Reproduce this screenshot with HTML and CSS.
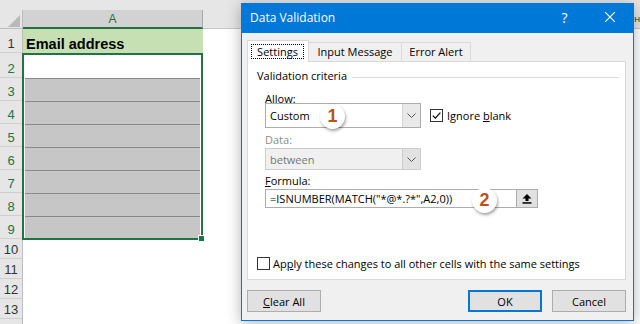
FILE: index.html
```html
<!DOCTYPE html>
<html>
<head>
<meta charset="utf-8">
<link rel="stylesheet" href="styles.css">
</head>
<body>
<div class="topstrip"></div>
<div class="sheet">
  <div class="rowheads">
    <div class="corner"><span class="tri"></span></div>
    <div class="rh h24">1</div>
    <div class="rh h25 sel">2</div>
    <div class="rh h23 sel">3</div>
    <div class="rh h23 sel">4</div>
    <div class="rh h23 sel">5</div>
    <div class="rh h23 sel">6</div>
    <div class="rh h23 sel">7</div>
    <div class="rh h23 sel">8</div>
    <div class="rh h23 sel">9</div>
    <div class="rh h20">10</div>
    <div class="rh h20">11</div>
    <div class="rh h20">12</div>
    <div class="rh h20">13</div>
    <div class="rh h20"></div>
  </div>
  <div class="colA">
    <div class="colhead">A</div>
    <div class="cell title-cell">Email address</div>
    <div class="selection">
      <div class="cell active"></div>
      <div class="cell gray"></div>
      <div class="cell gray"></div>
      <div class="cell gray"></div>
      <div class="cell gray"></div>
      <div class="cell gray"></div>
      <div class="cell gray"></div>
      <div class="cell gray last"></div>
      <span class="handle"></span>
    </div>
  </div>
  <div class="colrest">
    <div class="hdr-fill"><span class="hdr-letter">H</span></div>
  </div>
</div>

<div class="dialog">
  <div class="titlebar">
    <span class="title">Data Validation</span>
    <span class="tb-btn help">?</span>
    <span class="tb-btn close">
      <svg width="10" height="10" viewBox="0 0 10 10"><path d="M0 0 L10 10 M10 0 L0 10" stroke="#fff" stroke-width="1.1" fill="none"/></svg>
    </span>
  </div>
  <div class="dbody">
    <div class="tabs">
      <div class="tab active"><span class="focus">Settings</span></div>
      <div class="tab t-input">Input Message</div>
      <div class="tab t-error">Error Alert</div>
    </div>
    <div class="panel">
      <div class="group-title"><span>Validation criteria</span><span class="gline"></span></div>

      <div class="label lbl-allow"><u>A</u>llow:</div>
      <div class="allow-row">
        <div class="combo combo-allow">
          <span class="combo-text">Custom</span>
          <span class="drop">
            <svg width="9" height="5" viewBox="0 0 9 5"><path d="M0.5 0.5 L4.5 4.5 L8.5 0.5" stroke="#555" stroke-width="1" fill="none"/></svg>
          </span>
          <span class="badge b1">1</span>
        </div>
        <div class="check">
          <span class="box">
            <svg width="11" height="11" viewBox="0 0 11 11"><path d="M1.8 5.6 L4.3 8.1 L9.4 2.6" stroke="#000" stroke-width="1.2" fill="none"/></svg>
          </span>
          <span>Ignore <u>b</u>lank</span>
        </div>
      </div>

      <div class="label dis lbl-data">Data:</div>
      <div class="combo combo-dis">
        <span class="combo-text">between</span>
        <span class="drop">
          <svg width="9" height="5" viewBox="0 0 9 5"><path d="M0.5 0.5 L4.5 4.5 L8.5 0.5" stroke="#555" stroke-width="1" fill="none"/></svg>
        </span>
      </div>

      <div class="label lbl-formula"><u>F</u>ormula:</div>
      <div class="formula">
        <span class="ftext">=ISNUMBER(MATCH("*@*.?*",A2,0))</span>
        <span class="fbtn">
          <svg width="10" height="10" viewBox="0 0 10 10"><polygon points="5,0 9.5,4.5 6.5,4.5 6.5,7 3.5,7 3.5,4.5 0.5,4.5" fill="#000"/><rect x="0.5" y="8.2" width="9" height="1.5" fill="#000"/></svg>
        </span>
        <span class="badge b2">2</span>
      </div>

      <div class="check apply">
        <span class="box"></span>
        <span>Ap<u>p</u>ly these changes to all other cells with the same settings</span>
      </div>
    </div>
    <div class="buttons">
      <div class="btn"><u>C</u>lear All</div>
      <div class="btn ok">OK</div>
      <div class="btn cancel">Cancel</div>
    </div>
  </div>
</div>
</body>
</html>
```

FILE: styles.css
```css
* { box-sizing: border-box; margin: 0; padding: 0; }
html, body { width: 640px; height: 324px; overflow: hidden; }
body {
  background: #fff;
  font-family: "Liberation Sans", Arial, sans-serif;
  position: relative;
}

/* ---------- spreadsheet ---------- */
.topstrip { height: 10px; background: #e6e6e6; }
.sheet { display: flex; }
.rowheads { width: 23px; display: flex; flex-direction: column; }
.corner {
  height: 19px;
  background: #e6e6e6;
  border-right: 1px solid #bdbdbd;
  border-bottom: 1px solid #bdbdbd;
  display: flex;
  justify-content: flex-end;
  align-items: flex-end;
  padding: 0 2px 1px 0;
}
.tri {
  width: 0; height: 0;
  border-left: 12px solid transparent;
  border-bottom: 12px solid #b9b9b9;
}
.rh {
  background: #e6e6e6;
  border-right: 1px solid #bdbdbd;
  border-bottom: 1px solid #cfcfcf;
  display: flex;
  justify-content: center;
  align-items: flex-end;
  font-size: 13px;
  line-height: 13px;
  color: #333;
  padding-bottom: 2px;
}
.rh.sel { color: #217346; }
.h24 { height: 24px; }
.h25 { height: 25px; }
.h23 { height: 23px; }
.h20 { height: 20px; }

.colA { width: 180px; display: flex; flex-direction: column; }
.colhead {
  height: 19px;
  background: #d2d2d2;
  border-bottom: 2px solid #217346;
  border-right: 1px solid #ababab;
  color: #217346;
  font-size: 12px;
  display: flex;
  align-items: center;
  justify-content: center;
}
.title-cell {
  height: 24px;
  background: #c6e0b4;
  font-weight: bold;
  font-size: 14.5px;
  line-height: 15px;
  padding: 0 0 1px 3px;
  display: flex;
  align-items: flex-end;
  color: #000;
}
.selection {
  position: relative;
  margin-left: -1px;
  width: 181px;
  height: 187px;
  border: 2px solid #217346;
  padding: 0 1px;
  display: flex;
  flex-direction: column;
}
.cell.active { height: 23px; background: #fff; }
.cell.gray {
  height: 23px;
  background: #c6c6c6;
  border-top: 1px solid #8a8a8a;
}
.cell.gray.last { height: 22px; }
.handle {
  position: absolute;
  right: -4px;
  bottom: -4px;
  width: 7px;
  height: 7px;
  background: #217346;
  border: 1px solid #fff;
}
.colrest { flex: 1; }
.hdr-fill {
  height: 19px;
  background: #e6e6e6;
  border-bottom: 1px solid #c6c6c6;
  display: flex;
  justify-content: flex-end;
  align-items: center;
}
.hdr-letter { font-size: 8px; color: #222; margin-right: 0; }

/* ---------- dialog ---------- */
.dialog {
  position: absolute;
  left: 241px;
  top: 3px;
  width: 393px;
  height: 318px;
  border: 1px solid #0078d7;
  background: #f0f0f0;
  box-shadow: 0 2px 14px rgba(0, 0, 0, 0.3);
  display: flex;
  flex-direction: column;
  font-family: "Open Sans", "Noto Sans", sans-serif;
  font-size: 11px;
  color: #000;
}
.titlebar {
  height: 29px;
  background: #0078d7;
  color: #fff;
  display: flex;
  align-items: center;
}
.title { flex: 1; padding-left: 8px; font-size: 12px; padding-bottom: 3px; }
.tb-btn {
  width: 45px;
  height: 29px;
  display: flex;
  align-items: center;
  justify-content: center;
  padding-bottom: 3px;
}
.help { font-size: 14px; }
.close { width: 46px; }

.dbody {
  flex: 1;
  display: flex;
  flex-direction: column;
  padding: 7px 7px 8px 5px;
}
.tabs { height: 21px; display: flex; align-items: flex-start; }
.tab {
  height: 19px;
  margin-top: 2px;
  border: 1px solid #d9d9d9;
  border-bottom: none;
  background: #f0f0f0;
  text-align: center;
  line-height: 14px;
  padding-top: 2px;
  margin-left: -1px;
}
.tab.active {
  position: relative;
  z-index: 1;
  height: 22px;
  margin-top: 0;
  margin-left: 0;
  width: 62px;
  background: #fff;
  padding: 3px 4px 3px 3px;
  display: flex;
}
.focus {
  flex: 1;
  border: 1px dotted #000;
  line-height: 13px;
  text-align: center;
}
.t-input { width: 94px; }
.t-error { width: 70px; }

.panel {
  height: 219px;
  background: #fff;
  border: 1px solid #d9d9d9;
  display: flex;
  flex-direction: column;
  padding: 0 0 0 9px;
}
.group-title {
  margin-top: 6px;
  height: 16px;
  line-height: 16px;
  display: flex;
  align-items: center;
}
.gline {
  flex: 1;
  height: 1px;
  background: #dcdcdc;
  margin: 2px 6px 0 5px;
}
.label { margin-left: 8px; height: 12px; line-height: 12px; }
.label.dis { color: #8d8d8d; }
.lbl-allow { margin-top: 9px; margin-bottom: -2px; }
.lbl-data { margin-top: 6px; margin-bottom: 2px; }
.lbl-formula { margin-top: 5px; margin-bottom: 2px; }

.allow-row { display: flex; align-items: center; margin-left: 8px; }
.combo {
  position: relative;
  width: 156px;
  display: flex;
  align-items: stretch;
  border: 1px solid #acacac;
}
.combo-allow { height: 25px; background: #fff; }
.combo-dis { height: 22px; margin-left: 8px; background: #f0f0f0; border-color: #cccccc; color: #777; }
.combo-text { flex: 1; padding-left: 4px; display: flex; align-items: center; }
.drop {
  width: 18px;
  background: #e9e9e9;
  border-left: 1px solid #d4d4d4;
  display: flex;
  align-items: center;
  justify-content: center;
}
.combo-dis .drop { background: #e2e2e2; border-left-color: #cccccc; }

.check { display: flex; align-items: center; }
.allow-row .check { margin-left: 9px; gap: 4px; }
.box {
  width: 13px;
  height: 13px;
  border: 1px solid #333;
  background: #fff;
  display: flex;
}
.apply { margin-top: auto; margin-bottom: 8px; height: 16px; gap: 3px; }

.formula {
  position: relative;
  margin-left: 8px;
  width: 273px;
  height: 19px;
  border: 1px solid #acacac;
  display: flex;
  background: #fff;
}
.ftext { flex: 1; padding-left: 4px; display: flex; align-items: center; }
.fbtn {
  width: 21px;
  background: #e1e1e1;
  border-left: 1px solid #acacac;
  display: flex;
  align-items: center;
  justify-content: center;
}

.badge {
  position: absolute;
  width: 25px;
  height: 25px;
  border-radius: 50%;
  background: #fff;
  box-shadow: 1px 2px 3px rgba(0, 0, 0, 0.35);
  display: flex;
  align-items: center;
  justify-content: center;
  font-family: "Liberation Sans", Arial, sans-serif;
  font-weight: bold;
  font-size: 18px;
  color: #b9531d;
}
.b1 { left: 54px; top: 0px; }
.b2 { left: 206px; top: -2px; }

.buttons { display: flex; margin-top: 10px; }
.btn {
  width: 74px;
  height: 22px;
  border: 1px solid #adadad;
  background: #e1e1e1;
  display: flex;
  align-items: center;
  justify-content: center;
}
.btn.ok { margin-left: auto; border: 2px solid #0078d7; }
.btn.cancel { margin-left: 10px; }
```
